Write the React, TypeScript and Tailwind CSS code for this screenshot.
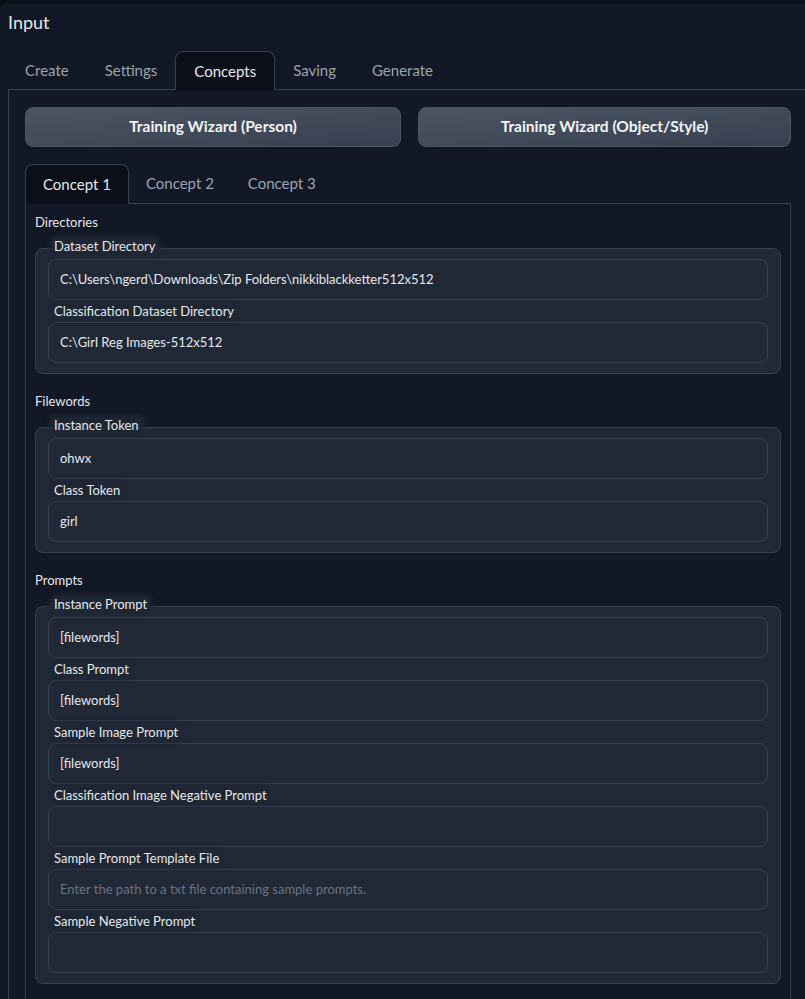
import React from "react";

const font = { fontFamily: "Lato, 'Liberation Sans', sans-serif" };

function Field({ label, value, placeholder, first }: { label: string; value?: string; placeholder?: string; first?: boolean }) {
  return (
    <div className={first ? "-mt-[12px]" : ""}>
      <div className="h-[22px] flex items-center pl-[4px]">
        <span
          className={
            "px-[2px] leading-[14px] text-[13px] text-[#e5e7eb] bg-[#1f2734] shadow-[0_0_5px_3px_#1f2734] rounded-sm " +
            (first ? "relative -top-[2px]" : "")
          }
        >
          {label}
        </span>
      </div>
      <div className="h-[41px] rounded-lg border border-[#374151] bg-[#212937] flex items-center px-[11px] text-[13px]">
        {value ? (
          <span className="text-[#e5e7eb]">{value}</span>
        ) : (
          <span className="text-[#6b7280]">{placeholder ?? ""}</span>
        )}
      </div>
    </div>
  );
}

function Section({ title, fields }: { title: string; fields: { label: string; value?: string; placeholder?: string }[] }) {
  return (
    <div className="mt-[17px] first:mt-0">
      <div className="h-[20px] leading-[20px] text-[13px] text-[#e5e7eb]">{title}</div>
      <div className="mt-[16px] rounded-lg border border-[#374151] bg-[#212937] px-[12px] pb-[10px]">
        {fields.map((f, i) => (
          <Field key={f.label} {...f} first={i === 0} />
        ))}
      </div>
    </div>
  );
}

export default function App() {
  const mainTabs = ["Create", "Settings", "Concepts", "Saving", "Generate"];
  const conceptTabs = ["Concept 1", "Concept 2", "Concept 3"];
  return (
    <div className="w-[805px] h-[999px] overflow-hidden bg-[#0b0f19]" style={font}>
      <div className="mt-[4px] h-[995px] bg-[#121826] rounded-tl-md">
        <div className="pl-[8px] h-[47px] pt-[6px] text-[18px] leading-[24px] text-[#e5e7eb]">Input</div>
        <div className="flex items-end pl-[7px] h-[38px]">
          {mainTabs.map((t) => (
            <div
              key={t}
              className={
                "h-[38px] px-[18px] flex items-center text-[15px] " +
                (t === "Concepts"
                  ? "bg-[#0b0f19] text-[#e5e7eb] border border-b-0 border-[#374151] rounded-t-lg relative z-10 mb-[-1px] h-[39px]"
                  : "text-[#9ca3af]")
              }
            >
              {t}
            </div>
          ))}
        </div>
        <div className="ml-[8px] border-l border-t border-[#374151] pl-[16px] pt-[17px] h-[920px]">
          <div className="flex gap-[17px] w-[766px]">
            <div className="w-[376px] h-[40px] rounded-lg border border-[#4b5563] bg-gradient-to-br from-[#4b5563] to-[#374151] flex items-center justify-center text-[15.5px] font-bold text-[#f3f4f6]">
              Training Wizard (Person)
            </div>
            <div className="flex-1 h-[40px] rounded-lg border border-[#4b5563] bg-gradient-to-br from-[#4b5563] to-[#374151] flex items-center justify-center text-[15.5px] font-bold text-[#f3f4f6]">
              Training Wizard (Object/Style)
            </div>
          </div>
          <div className="mt-[17px] flex items-end h-[39px]">
            {conceptTabs.map((t, i) => (
              <div
                key={t}
                className={
                  "px-[17px] flex items-center text-[15px] " +
                  (i === 0
                    ? "h-[40px] bg-[#0b0f19] text-[#e5e7eb] border border-b-0 border-[#374151] rounded-t-lg relative z-10 mb-[-1px]"
                    : "h-[39px] text-[#9ca3af]")
                }
              >
                {t}
              </div>
            ))}
          </div>
          <div className="w-[766px] border border-[#374151] pl-[9px] pr-[9px] pt-[8px] h-[820px]">
            <Section
              title="Directories"
              fields={[
                { label: "Dataset Directory", value: "C:\\Users\\ngerd\\Downloads\\Zip Folders\\nikkiblackketter512x512" },
                { label: "Classification Dataset Directory", value: "C:\\Girl Reg Images-512x512" },
              ]}
            />
            <Section
              title="Filewords"
              fields={[
                { label: "Instance Token", value: "ohwx" },
                { label: "Class Token", value: "girl" },
              ]}
            />
            <Section
              title="Prompts"
              fields={[
                { label: "Instance Prompt", value: "[filewords]" },
                { label: "Class Prompt", value: "[filewords]" },
                { label: "Sample Image Prompt", value: "[filewords]" },
                { label: "Classification Image Negative Prompt" },
                { label: "Sample Prompt Template File", placeholder: "Enter the path to a txt file containing sample prompts." },
                { label: "Sample Negative Prompt" },
              ]}
            />
          </div>
        </div>
      </div>
    </div>
  );
}
